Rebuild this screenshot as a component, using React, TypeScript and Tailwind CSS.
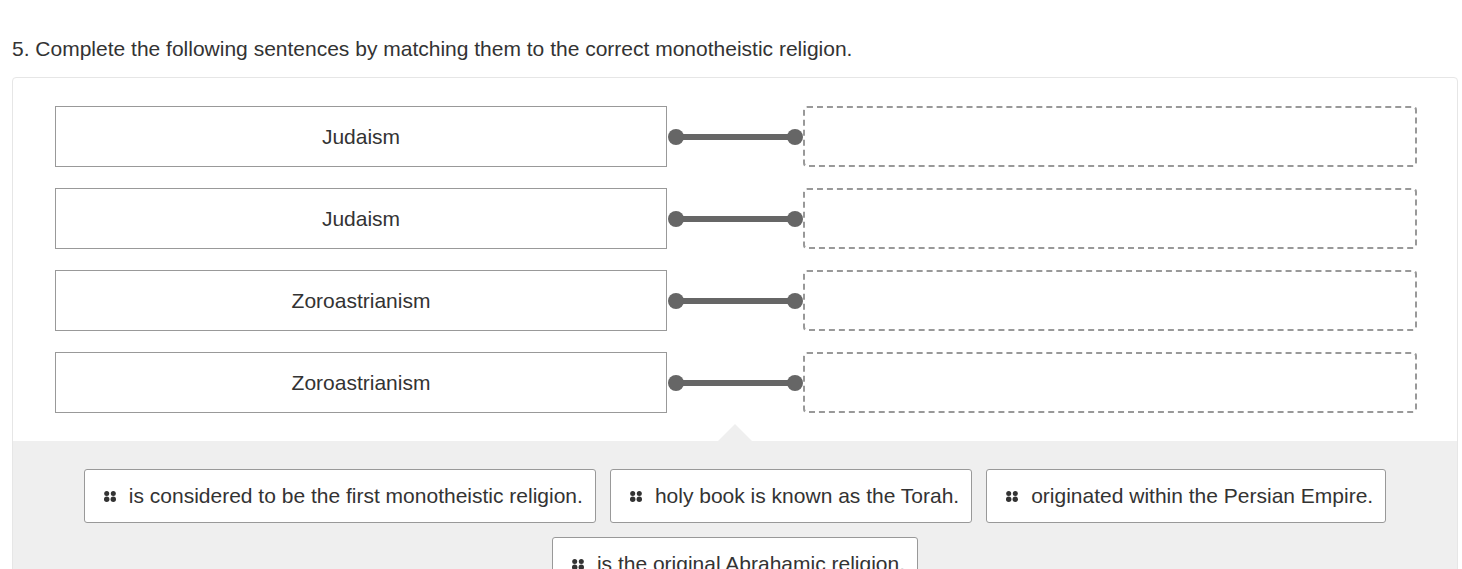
import React from "react";

const premises = ["Judaism", "Judaism", "Zoroastrianism", "Zoroastrianism"];

const answers = [
    "is considered to be the first monotheistic religion.",
    "holy book is known as the Torah.",
    "originated within the Persian Empire.",
    "is the original Abrahamic religion.",
];

// Little four-dot drag handle shown in each answer chip.
const GripIcon: React.FC = () => (
    <svg width="12" height="11" viewBox="0 0 12 11" className="shrink-0">
        <circle cx="2.7" cy="2.5" r="2.5" fill="#333" />
        <circle cx="9.3" cy="2.5" r="2.5" fill="#333" />
        <circle cx="2.7" cy="8.3" r="2.7" fill="#333" />
        <circle cx="9.3" cy="8.3" r="2.7" fill="#333" />
    </svg>
);

const Connector: React.FC = () => (
    <div className="relative h-full">
        <div className="absolute left-[2px] right-[9px] top-1/2 -translate-y-1/2 h-[6px] bg-[#666]" />
        <div className="absolute left-[1px] top-1/2 -translate-y-1/2 w-[16px] h-[16px] rounded-full bg-[#666]" />
        <div className="absolute right-0 top-1/2 -translate-y-1/2 w-[16px] h-[16px] rounded-full bg-[#666]" />
    </div>
);

const App: React.FC = () => {
    return (
        <div className="min-h-screen bg-white pl-[12px] pr-[4px] pt-[34px] text-[#333]" style={{ fontFamily: '"Liberation Sans", Arial, sans-serif' }}>
            <p className="text-[21px] leading-[30px] mb-[13px]">
                5. Complete the following sentences by matching them to the correct monotheistic religion.
            </p>

            <div className="border border-[#e6e6e6] rounded-[4px] overflow-hidden">
                <div className="pl-[42px] pr-[40px] pt-[28px] pb-[28px] flex flex-col gap-[21px]">
                    {premises.map((p, i) => (
                        <div key={i} className="grid grid-cols-[612px_136px_1fr] h-[61px]">
                            <div className="border border-[#999] bg-white flex items-center justify-center text-[21px]">
                                {p}
                            </div>
                            <Connector />
                            <div className="border-2 border-dashed border-[#999] rounded-[4px]" />
                        </div>
                    ))}
                </div>

                <div className="relative bg-[#efefef] pt-[28px] pb-[20px] px-[40px]">
                    <div className="absolute left-1/2 -translate-x-1/2 -top-[17px] w-0 h-0 border-l-[17px] border-r-[17px] border-b-[17px] border-l-transparent border-r-transparent border-b-[#efefef]" />
                    <div className="flex flex-wrap justify-center gap-[14px]">
                        {answers.map((a, i) => (
                            <div
                                key={i}
                                className="flex items-center gap-[13px] h-[54px] pl-[19px] pr-[12px] bg-white border border-[#999] rounded-[3px] text-[21px]"
                            >
                                <GripIcon />
                                <span>{a}</span>
                            </div>
                        ))}
                    </div>
                </div>
            </div>
        </div>
    );
};

export default App;
